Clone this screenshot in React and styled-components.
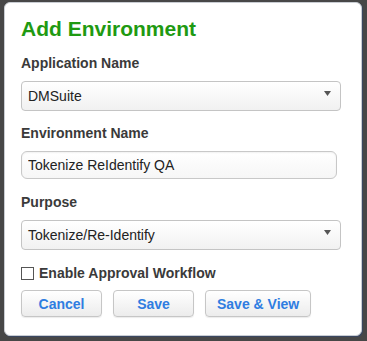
import React from "react"
import styled, { createGlobalStyle } from "styled-components"

const GlobalStyle = createGlobalStyle`
  html, body {
    margin: 0;
    padding: 0;
    background: #474747;
  }
  body {
    font-family: "Liberation Sans", Arial, sans-serif;
    width: 367px;
    height: 341px;
    overflow: hidden;
  }
`

const Overlay = styled.div`
  padding: 2px 0 0 4px;
`

const Dialog = styled.div`
  box-sizing: border-box;
  width: 358px;
  height: 334px;
  background: #fff;
  border: 1px solid #c9cdd3;
  border-radius: 6px;
  box-shadow: 1px 1px 0 #3a4760;
  padding: 14px 16px 0 16px;
  display: flex;
  flex-direction: column;
`

const Title = styled.h2`
  margin: 0 0 12px;
  font-size: 21px;
  line-height: 24px;
  font-weight: bold;
  color: #1f9a12;
`

const Label = styled.label`
  display: block;
  font-size: 14px;
  line-height: 20px;
  font-weight: bold;
  color: #3a3a3a;
  margin-bottom: 8px;
`

const Field = styled.div`
  margin-bottom: ${p => p.$gap ?? 12}px;
`

const SelectBox = styled.div`
  box-sizing: border-box;
  width: 320px;
  height: 30px;
  border: 1px solid #c4c4c4;
  border-radius: 4px;
  background: linear-gradient(#ffffff, #f1f1f1);
  display: flex;
  align-items: center;
  justify-content: space-between;
  padding: 0 9px 0 6px;
  font-size: 14px;
  color: #222;
`

const Arrow = styled.svg`
  width: 7px;
  height: 5px;
  margin-top: -6px;
`

const TextInput = styled.input`
  box-sizing: border-box;
  width: 316px;
  height: 28px;
  border: 1px solid #c8c8c8;
  border-radius: 6px;
  background: linear-gradient(#ffffff, #f6f6f6);
  box-shadow: inset 0 1px 2px rgba(0, 0, 0, 0.06);
  padding: 0 6px;
  font-family: "Liberation Sans", Arial, sans-serif;
  font-size: 14px;
  color: #222;
  outline: none;
`

const CheckRow = styled.label`
  display: flex;
  align-items: center;
  gap: 5px;
  font-size: 14px;
  line-height: 20px;
  font-weight: bold;
  color: #3a3a3a;
  margin: 13px 0 7px;
`

const CheckBox = styled.input`
  appearance: none;
  box-sizing: border-box;
  width: 13px;
  height: 13px;
  margin: 0;
  border: 1px solid #555;
  background: #fff;
`

const ButtonRow = styled.div`
  display: flex;
  gap: 11px;
`

const Button = styled.button`
  box-sizing: border-box;
  min-width: 81px;
  height: 27px;
  padding: 0 11px;
  border: 1px solid #c6c6c6;
  border-radius: 4px;
  background: linear-gradient(#ffffff, #ececec);
  box-shadow: 0 1px 1px rgba(0, 0, 0, 0.08);
  font-family: "Liberation Sans", Arial, sans-serif;
  font-size: 14px;
  font-weight: bold;
  color: #2f7de1;
  cursor: pointer;
`

const Select = ({ value }) => (
  <SelectBox>
    <span>{value}</span>
    <Arrow viewBox="0 0 7 5">
      <path d="M0 0 L7 0 L3.5 5 Z" fill="#555" />
    </Arrow>
  </SelectBox>
)

export default function App() {
  return (
    <Overlay>
      <GlobalStyle />
      <Dialog>
        <Title>Add Environment</Title>
        <Field>
          <Label>Application Name</Label>
          <Select value="DMSuite" />
        </Field>
        <Field $gap={13}>
          <Label>Environment Name</Label>
          <TextInput defaultValue="Tokenize ReIdentify QA" />
        </Field>
        <Field $gap={0}>
          <Label>Purpose</Label>
          <Select value="Tokenize/Re-Identify" />
        </Field>
        <CheckRow>
          <CheckBox type="checkbox" />
          Enable Approval Workflow
        </CheckRow>
        <ButtonRow>
          <Button>Cancel</Button>
          <Button>Save</Button>
          <Button>Save &amp; View</Button>
        </ButtonRow>
      </Dialog>
    </Overlay>
  )
}
